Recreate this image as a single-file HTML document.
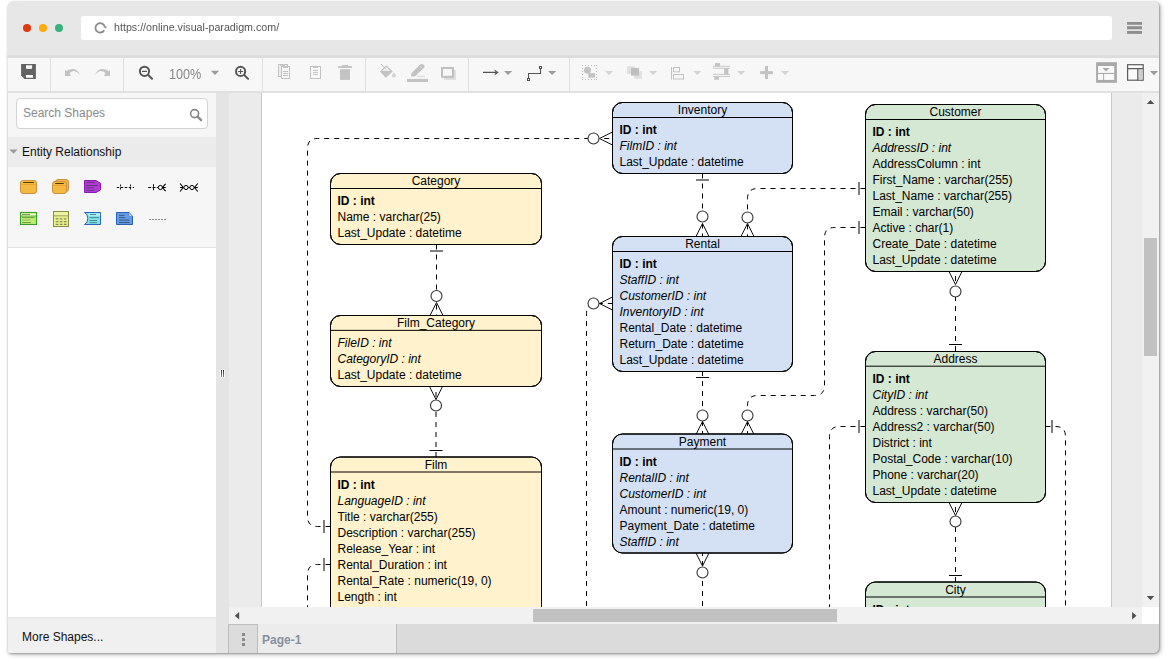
<!DOCTYPE html>
<html lang="en"><head><meta charset="utf-8"><title>Visual Paradigm Online - ERD</title>
<style>
*{box-sizing:border-box;margin:0;padding:0}
html,body{width:1170px;height:665px;overflow:hidden;background:#fff}
body{font-family:"Liberation Sans",sans-serif;font-size:12px;color:#000;position:relative}
.abs{position:absolute}
#win{position:absolute;left:7px;top:1px;width:1152px;height:652px;background:#e7e7e7;border-radius:7px 5px 6px 3px;box-shadow:1px 1px 2px 0 rgba(0,0,0,.27),2px 2px 4px 0 rgba(0,0,0,.22);overflow:hidden}
#win>*{position:absolute}
#url{left:74px;top:15px;width:1031px;height:24px;background:#fff;border-radius:3px}
#url span{will-change:opacity;position:absolute;left:33px;top:5px;font-size:10.7px;line-height:12px;color:#555;white-space:nowrap}
.dot{width:8px;height:8px;border-radius:50%;top:23px}
#tbline{left:0;top:54px;width:1152px;height:3px;background:#dcdcdc}
#toolbar{left:0;top:57px;width:1152px;height:33px;background:#f7f7f7;box-shadow:inset 1px 0 0 #e6e6e6}
#tbline2{left:0;top:90px;width:1152px;height:2px;background:#e0e0e0}
.sep{position:absolute;top:0;width:1px;height:33px;background:#dfdfdf}
#left{left:0;top:92px;width:209px;height:524px;background:#fff;border-left:1px solid #e0e0e0}
#lefttop{position:absolute;left:0;top:0;width:208px;height:155px;background:#f6f6f6;border-bottom:1px solid #e2e2e2}
#search{position:absolute;left:8px;top:5px;width:192px;height:31px;background:#fff;border:1px solid #d4d4d4;border-radius:4px}
#search span{position:absolute;left:6px;top:7px;font-size:12px;line-height:14px;color:#8a8a8a;white-space:nowrap}
#sect{position:absolute;left:0;top:44px;width:208px;height:30px;background:#ebebeb}
#sect span{position:absolute;left:14px;top:8px;font-size:12px;line-height:14px;color:#111;white-space:nowrap}
#more{left:0;top:616px;width:209px;height:36px;background:#f0f0f0;border-left:1px solid #e0e0e0;border-top:2px solid #e9e9e9}
#more span{position:absolute;left:14px;top:11px;font-size:12px;line-height:14px;color:#111;white-space:nowrap}
#split{left:209px;top:92px;width:13px;height:560px;background:#e4e4e4}
#canvas{left:222px;top:92px;width:913px;height:514px;background:#ebebeb;overflow:hidden}
#page{position:absolute;left:32px;top:-10px;width:851px;height:600px;background:#fff;border:1px solid #c8c8c8;border-top:0}
#vs{left:1135px;top:92px;width:17px;height:514px;background:#f1f1f1}
#hs{left:222px;top:606px;width:913px;height:17px;background:#f1f1f1}
#corner{left:1135px;top:606px;width:17px;height:17px;background:#fff}
#tabs{left:222px;top:623px;width:930px;height:29px;background:#dbdbdb}
#tabbtn{position:absolute;left:-1px;top:0;width:30px;height:29px;background:#dcdcdc;border:1px solid #bdbdbd;border-bottom:0}
#tab{position:absolute;left:29px;top:0;width:139px;height:29px;background:#ececec;border-right:1px solid #bcbcbc}
#tab span{position:absolute;left:4px;top:9px;font-size:12px;line-height:14px;font-weight:bold;color:#8590a0;white-space:nowrap}
.thumb{position:absolute;background:#c1c1c1}
svg{position:absolute;overflow:visible}
svg text{font-family:"Liberation Sans",sans-serif;font-size:12px;fill:#000}
svg text.b{font-weight:bold}
svg text.i{font-style:italic}
.gs{will-change:opacity}
</style></head><body>
<div id="win">
<div class="dot" style="left:16px;background:#e0370d"></div>
<div class="dot" style="left:32px;background:#ffab09"></div>
<div class="dot" style="left:48px;background:#3bb27d"></div>
<div id="url"><svg style="left:13px;top:6px" width="14" height="13" viewBox="0 0 14 13" ><path d="M10.750 4.870A4.700 4.700 0 1 0 10.220 8.200" fill="none" stroke="#8b8b8b" stroke-width="1.800"/><path d="M9.400 6.100L12.500 3.900L12.400 6.300Z" fill="#8b8b8b"/></svg><span>https://online.visual-paradigm.com/</span></div>
<svg style="left:1120px;top:21px" width="15" height="12" viewBox="0 0 15 12" ><rect x="0" y="0" width="15" height="2.800" fill="#8e8e8e"/><rect x="0" y="4.200" width="15" height="2.900" fill="#8e8e8e"/><rect x="0" y="7.100" width="15" height="0.900" fill="#cbcbcb"/><rect x="0" y="9" width="15" height="2.900" fill="#8e8e8e"/></svg>
<div id="tbline"></div>
<div id="toolbar">
<div class="sep" style="left:43px"></div>
<div class="sep" style="left:116px"></div>
<div class="sep" style="left:255px"></div>
<div class="sep" style="left:358px"></div>
<div class="sep" style="left:461px"></div>
<div class="sep" style="left:562px"></div>
<svg style="left:0;top:0" width="1152" height="33" viewBox="0 0 1152 33"><path d="M14.100 6.100h14.800v14.800h-11.600l-3.200-3.600z" fill="#636363"/><path d="M19 7.2h6.100v2.300q0 1.500-1.500 1.500h-3.100q-1.500 0-1.500-1.500z" fill="#fafafa"/><rect x="19" y="17" width="7" height="2.800" fill="#fafafa"/><path d="M58 12L59.400 13Q62.500 10.600 66.500 11Q70.500 11.500 73 16.800Q69.500 12.900 66.500 13Q63.500 13.300 62.600 15.600L64 18L58 18Z" fill="#c3c3c3"/><path d="M58 12L59.400 13Q62.500 10.600 66.500 11Q70.500 11.500 73 16.800Q69.500 12.900 66.500 13Q63.500 13.300 62.600 15.600L64 18L58 18Z" fill="#c3c3c3" transform="translate(161 0) scale(-1 1)"/><circle cx="137.500" cy="13.300" r="4.600" fill="none" stroke="#555" stroke-width="2"/><path d="M141.200 17l3.800 3.800" stroke="#555" stroke-width="2" stroke-linecap="round"/><path d="M135 13.400h5" stroke="#555" stroke-width="1.100"/><text class="gs" x="162" y="21" textLength="32.300" lengthAdjust="spacingAndGlyphs" style="font-size:14px;fill:#8a8a8a">100%</text><path d="M203.9 12.8h8.200l-4.100 4.100z" fill="#9b9b9b"/><circle cx="233.600" cy="13.400" r="4.600" fill="none" stroke="#555" stroke-width="2"/><path d="M237.300 17.100l3.800 3.800" stroke="#555" stroke-width="2" stroke-linecap="round"/><path d="M231.100 13.500h5M233.600 11v5" stroke="#555" stroke-width="1.100"/><rect x="271.500" y="6.500" width="9" height="12" fill="#ececec" stroke="#c3c3c3"/><rect x="274.500" y="8.500" width="8" height="12" fill="#f9f9f9" stroke="#c3c3c3"/><path d="M276 13.500h5M276 15.500h5M276 17.500h5" stroke="#c3c3c3"/><rect x="276" y="8.300" width="5" height="1.700" fill="#c3c3c3"/><rect x="273.500" y="6.400" width="4.500" height="1.500" fill="#c3c3c3"/><rect x="303.500" y="8.500" width="10" height="12" fill="#f9f9f9" stroke="#c3c3c3"/><path d="M306 12.400h5M306 14.400h5M306 16.400h5" stroke="#c3c3c3"/><rect x="306" y="8.300" width="5" height="1.700" fill="#c3c3c3"/><rect x="331.100" y="8.100" width="13.800" height="1.900" fill="#c3c3c3"/><rect x="335" y="7" width="6" height="1.500" fill="#c3c3c3"/><rect x="333" y="11.200" width="10" height="10.700" fill="#c3c3c3"/><path d="M379.200 7.300l6.600 6.200l-7 6.300l-5.900-6.300z" fill="#c3c3c3"/><path d="M375.300 12.800l3.900-3.700l3.900 3.700z" fill="#f7f7f7"/><path d="M374 6l5.500 5.800" stroke="#c3c3c3" stroke-width="0.900"/><circle cx="386.900" cy="17.600" r="2" fill="#d2d2d2"/><rect x="386.200" y="14.800" width="1.400" height="2" fill="#d2d2d2"/><path d="M404.200 15.500l9.300-9.300q1.100-0.800 2.200 0l1.500 1.400q0.900 1 0 2l-9.200 9h-3.800z" fill="#c3c3c3"/><path d="M413 8l2.600 2.500" stroke="#e4e4e4" stroke-width="0.700"/><rect x="400" y="20.900" width="21" height="3.100" fill="#c3c3c3"/><path d="M410 18.400h8" stroke="#d0d0d0" stroke-width="0.800"/><rect x="437" y="12" width="11.800" height="9.800" fill="#dadada"/><rect x="435" y="10" width="10.900" height="8.800" fill="#f7f7f7" stroke="#c0c0c0" stroke-width="2"/><path d="M476 14.400h13.500" stroke="#555" stroke-width="1.100"/><path d="M487.800 11.900L491.300 14.400L487.800 16.900L488.800 14.400Z" fill="#555" stroke="#555" stroke-width="0.500"/><path d="M497 13h8.200l-4.100 4.100z" fill="#9b9b9b"/><path d="M521.500 20v-4.500h12v-4.500" fill="none" stroke="#555" stroke-width="1.100"/><rect x="520.500" y="20.500" width="2" height="2" fill="#fff" stroke="#555" stroke-width="1"/><rect x="532.500" y="8.500" width="2" height="2" fill="#fff" stroke="#555" stroke-width="1"/><path d="M541 13h8.200l-4.100 4.100z" fill="#9b9b9b"/><path d="M575 7.500h15M575 21.500h15M575.500 7v15M589.500 7v15" fill="none" stroke="#bdbdbd" stroke-width="1" stroke-dasharray="1 2 1 2 1 2 1 2 1 1 1 0"/><circle cx="580.500" cy="12.300" r="3.500" fill="#c3c3c3"/><rect x="581.300" y="15.200" width="6.700" height="4.500" fill="#c3c3c3"/><path d="M598 13h8.200l-4.100 4.100z" fill="#d2d4d2"/><rect x="620" y="8.200" width="8" height="7.700" fill="#e0e0e0"/><rect x="627.200" y="13.100" width="7.600" height="7.700" fill="#e0e0e0"/><rect x="624" y="10" width="8" height="7.700" fill="#c0c0c0"/><path d="M642 13h8.200l-4.100 4.100z" fill="#d2d4d2"/><path d="M664.500 9v12.700" stroke="#c3c3c3" stroke-width="1"/><rect x="666.500" y="9.500" width="6" height="4.300" fill="none" stroke="#c3c3c3" stroke-width="1"/><rect x="666.500" y="16.500" width="10" height="4.500" fill="none" stroke="#c3c3c3" stroke-width="1"/><path d="M686.2 13h8.200l-4.100 4.100z" fill="#d2d4d2"/><path d="M705.900 8.300h17.100M705.900 10.300h17.100M705.900 16.400h17.100M705.900 18.500h17.100" stroke="#c3c3c3" stroke-width="0.900"/><rect x="708" y="5.100" width="5.100" height="3.200" fill="#c3c3c3"/><rect x="717.200" y="10.300" width="4.100" height="6.100" fill="#c3c3c3"/><rect x="707.200" y="18.500" width="4.800" height="3.200" fill="#c3c3c3"/><path d="M730 13h8.200l-4.100 4.100z" fill="#d2d4d2"/><rect x="753.100" y="13.100" width="12.800" height="3" fill="#c2c2c2"/><rect x="757.900" y="8" width="3.100" height="13" fill="#c2c2c2"/><path d="M773.9 13h8.200l-4.100 4.100z" fill="#d2d4d2"/><rect x="1089.100" y="4.200" width="20.800" height="20.600" fill="#a9a9a9"/><rect x="1091" y="8" width="16.200" height="6.900" fill="#fafafa"/><rect x="1091" y="16" width="5.100" height="5.900" fill="#fafafa"/><rect x="1097.100" y="16" width="10.100" height="5.900" fill="#fafafa"/><path d="M1095.500 10h7l-3.500 3.500z" fill="#a9a9a9"/><rect x="1120.600" y="6.700" width="15.600" height="15.500" fill="#fbfbfb" stroke="#5c5c5c" stroke-width="1.200"/><rect x="1131.400" y="11.200" width="4.200" height="10.400" fill="#cfcfcf"/><path d="M1120.600 10.600h15.600M1130.800 10.600v11.600" stroke="#5c5c5c" stroke-width="1.200"/><path d="M1142.9 13.1h8.200l-4.100 4.100z" fill="#9b9b9b"/></svg>
</div>
<div id="tbline2"></div>
<div id="left"><div id="lefttop"><div id="search"><span>Search Shapes</span><svg style="left:172px;top:9px" width="14" height="14" viewBox="0 0 14 14" ><circle cx="5.600" cy="5.600" r="4" fill="none" stroke="#868686" stroke-width="1.600"/><path d="M8.600 8.600l3.500 3.500" stroke="#868686" stroke-width="2.200" stroke-linecap="round"/></svg></div>
<div id="sect"><svg style="left:1px;top:12px" width="10" height="6" viewBox="0 0 10 6" ><path d="M0.5 0.5h8l-4 4.2z" fill="#9a9a9a"/></svg><span>Entity Relationship</span></div>
<svg style="left:0;top:0" width="208" height="155" viewBox="0 0 208 155"><rect x="12.5" y="87.5" width="16" height="13" rx="2.600" fill="#f3b940" stroke="#cf8f3e" stroke-width="1"/><path d="M15.2 89.5h10.6" stroke="#4f3c00" stroke-width="1"/><path d="M13.1 91.5h14.8" stroke="#ea9a2e" stroke-width="0.700"/><rect x="47.5" y="86.5" width="13" height="12" rx="2.600" fill="#f3b940" stroke="#cf8f3e" stroke-width="1"/><rect x="44.5" y="88.5" width="14" height="12" rx="2.600" fill="#f3b940" stroke="#cf8f3e" stroke-width="1"/><path d="M47.2 90.5h8.6" stroke="#4f3c00" stroke-width="1"/><path d="M45.1 92.5h12.8" stroke="#ea9a2e" stroke-width="0.700"/><path d="M76.500 87.500h11.500l4.500 2.800v6.600l-4.500 2.600h-11.500z" fill="#b43ad8" stroke="#8a18ac" stroke-width="1"/><path d="M78.500 89.400h8.500M78 92.500h12M78 94.800h8M78 97.300h8.500" stroke="#5e3273" stroke-width="0.900"/><path d="M108.800 94.500h17.200" stroke="#000" stroke-width="1" stroke-dasharray="2.400 1.600"/><path d="M112.500 91.500v6M122.500 91.500v6" stroke="#000" stroke-width="0.900" stroke-dasharray="2 1"/><path d="M140.200 94.500h9.800" stroke="#000" stroke-width="1" stroke-dasharray="3 1.300"/><path d="M145.500 91.200v6.600" stroke="#000" stroke-dasharray="2.600 0.800"/><circle cx="152.400" cy="94.500" r="2.100" fill="none" stroke="#000"/><path d="M157.600 90.800l-3.200 3.700l3.200 3.700M154.500 94.500h3.300" fill="none" stroke="#000" stroke-width="1.100"/><path d="M172 90.500l3.300 4l-3.300 4M172 94.500h3.500" fill="none" stroke="#000" stroke-width="1.100"/><circle cx="178" cy="94.500" r="2.100" fill="none" stroke="#000"/><path d="M180.200 94.500h1.600" stroke="#000"/><circle cx="184" cy="94.500" r="2.100" fill="none" stroke="#000"/><path d="M189.800 90.500l-3.300 4l3.300 4M186.300 94.500h3.500" fill="none" stroke="#000" stroke-width="1.100"/><rect x="12.500" y="119.500" width="16" height="12" fill="#bbf06f" stroke="#3b9b2c" stroke-width="1.100"/><rect x="13.400" y="120.500" width="14.200" height="2.200" fill="#eafcc4"/><path d="M12.700 123.100h15.600" stroke="#3b9b2c" stroke-width="0.700"/><path d="M14 121.500h8" stroke="#7a8a5a" stroke-width="0.900"/><path d="M14 124.600h12.500M14 129.600h9" stroke="#6c8f48" stroke-width="0.900"/><path d="M14 127.100h8.500" stroke="#9cc070" stroke-width="1.300"/><rect x="45.500" y="118.500" width="15" height="15" fill="#e7f08a" stroke="#8b8b4b" stroke-width="1"/><rect x="46.200" y="119.300" width="13.800" height="3" fill="#eef6a6"/><path d="M45.700 122.800h14.800" stroke="#8b8b4b" stroke-width="0.800"/><path d="M47.700 125.900h11M47.700 128.700h11M47.700 131.400h11" stroke="#8f8f55" stroke-width="1.300" stroke-dasharray="2.700 1.400"/><path d="M76.500 119.500h16v12h-16q3.300-1.200 3.300-6q0-4.800-3.300-6z" fill="#82e2e8" stroke="#2d62b4" stroke-width="1"/><path d="M80.300 120.400h11.800v2.300h-11.600z" fill="#aef4fa"/><path d="M82 121.500h6" stroke="#5a7a8a" stroke-width="0.900"/><path d="M81.500 124.600h9.500M81.500 127.500h7.500M81.500 129.700h7.500" stroke="#43808f" stroke-width="0.900"/><path d="M108.500 119.500h12.300l3.700 3.700v8.300h-16z" fill="#5f9dea" stroke="#2a5fb4"/><path d="M111 122.400h5.500M111 124.700h6M111 127.100h10.500M111 129.500h10.500" stroke="#3d4f6e" stroke-width="0.900"/><path d="M120.800 119.500v3.700h3.700z" fill="#e6f0ff" stroke="#2a5fb4" stroke-width="0.500"/><path d="M141 126.500h17" stroke="#8a8a8a" stroke-width="1" stroke-dasharray="2.100 0.900"/></svg>
</div></div>
<div id="more"><span>More Shapes...</span></div>
<div id="split"><svg style="left:3px;top:276px" width="7" height="10" viewBox="0 0 7 10" ><defs><linearGradient id="sg" x1="0" y1="0" x2="0" y2="1"><stop offset="0" stop-color="#2a2a2a"/><stop offset="1" stop-color="#8c8c8c"/></linearGradient></defs><rect x="0.900" y="0.500" width="4.800" height="7.800" fill="#fff"/><rect x="2" y="1" width="1" height="7" fill="url(#sg)"/><rect x="4" y="1" width="1" height="7" fill="url(#sg)"/></svg></div>
<div id="canvas"><div id="page"></div>
<svg width="913" height="514" viewBox="229 93 913 514" style="left:0;top:0">
<path d="M330.5 526.5L317.5 526.5Q307.5 526.5 307.5 516.5L307.5 148.5Q307.5 138.5 317.5 138.5L612.5 138.5" fill="none" stroke="#000" stroke-width="1" stroke-dasharray="5 5"/>
<path d="M324 520L324 533" fill="none" stroke="#000" stroke-width="1"/>
<path d="M612.5 132L599.5 138.5L612.5 145" fill="none" stroke="#111" stroke-width="1"/>
<circle cx="593.5" cy="138.5" r="5.5" fill="#fff" stroke="#333" stroke-width="1.1"/>
<path d="M330.5 564.5L317.5 564.5Q307.5 564.5 307.5 574.5L307.5 720" fill="none" stroke="#000" stroke-width="1" stroke-dasharray="5 5"/>
<path d="M324 558L324 571" fill="none" stroke="#000" stroke-width="1"/>
<path d="M436.5 244.5L436.5 315.5" fill="none" stroke="#000" stroke-width="1" stroke-dasharray="5 5"/>
<path d="M430 251L443 251" fill="none" stroke="#000" stroke-width="1"/>
<path d="M443 315.5L436.5 302.5L430 315.5" fill="none" stroke="#111" stroke-width="1"/>
<circle cx="436.5" cy="296" r="5.5" fill="#fff" stroke="#333" stroke-width="1.1"/>
<path d="M436 457L436 386.5" fill="none" stroke="#000" stroke-width="1" stroke-dasharray="5 5"/>
<path d="M442.5 450.5L429.5 450.5" fill="none" stroke="#000" stroke-width="1"/>
<path d="M429.5 386.5L436 399.5L442.5 386.5" fill="none" stroke="#111" stroke-width="1"/>
<circle cx="436" cy="405.5" r="5.5" fill="#fff" stroke="#333" stroke-width="1.1"/>
<path d="M702.5 173.5L702.5 236.5" fill="none" stroke="#000" stroke-width="1" stroke-dasharray="5 5"/>
<path d="M696 180L709 180" fill="none" stroke="#000" stroke-width="1"/>
<path d="M709 236.5L702.5 223.5L696 236.5" fill="none" stroke="#111" stroke-width="1"/>
<circle cx="702.5" cy="216.5" r="5.5" fill="#fff" stroke="#333" stroke-width="1.1"/>
<path d="M865.5 188.5L757.5 188.5Q747.5 188.5 747.5 198.5L747.5 236.5" fill="none" stroke="#000" stroke-width="1" stroke-dasharray="5 5"/>
<path d="M859 182L859 195" fill="none" stroke="#000" stroke-width="1"/>
<path d="M754 236.5L747.5 223.5L741 236.5" fill="none" stroke="#111" stroke-width="1"/>
<circle cx="747.5" cy="217.5" r="5.5" fill="#fff" stroke="#333" stroke-width="1.1"/>
<path d="M586.5 720L586.5 313.5Q586.5 303.5 596.5 303.5L612.5 303.5" fill="none" stroke="#000" stroke-width="1" stroke-dasharray="5 5" stroke-dashoffset="6"/>
<path d="M612.5 297L599.5 303.5L612.5 310" fill="none" stroke="#111" stroke-width="1"/>
<circle cx="593.5" cy="303.5" r="5.5" fill="#fff" stroke="#333" stroke-width="1.1"/>
<path d="M702.5 371L702.5 434.5" fill="none" stroke="#000" stroke-width="1" stroke-dasharray="5 5"/>
<path d="M696 377.5L709 377.5" fill="none" stroke="#000" stroke-width="1"/>
<path d="M709 434.5L702.5 421.5L696 434.5" fill="none" stroke="#111" stroke-width="1"/>
<circle cx="702.5" cy="415.5" r="5.5" fill="#fff" stroke="#333" stroke-width="1.1"/>
<path d="M865.5 227.5L834.5 227.5Q824.5 227.5 824.5 237.5L824.5 385.5Q824.5 395.5 814.5 395.5L757.5 395.5Q747.5 395.5 747.5 405.5L747.5 434.5" fill="none" stroke="#000" stroke-width="1" stroke-dasharray="5 5"/>
<path d="M859 221L859 234" fill="none" stroke="#000" stroke-width="1"/>
<path d="M754 434.5L747.5 421.5L741 434.5" fill="none" stroke="#111" stroke-width="1"/>
<circle cx="747.5" cy="415.5" r="5.5" fill="#fff" stroke="#333" stroke-width="1.1"/>
<path d="M702.5 720L702.5 553" fill="none" stroke="#000" stroke-width="1" stroke-dasharray="5 5" stroke-dashoffset="6"/>
<path d="M696 553L702.5 566L709 553" fill="none" stroke="#111" stroke-width="1"/>
<circle cx="702.5" cy="572.5" r="5.5" fill="#fff" stroke="#333" stroke-width="1.1"/>
<path d="M955.5 351L955.5 271.5" fill="none" stroke="#000" stroke-width="1" stroke-dasharray="5 5"/>
<path d="M962 344.5L949 344.5" fill="none" stroke="#000" stroke-width="1"/>
<path d="M949 271.5L955.5 284.5L962 271.5" fill="none" stroke="#111" stroke-width="1"/>
<circle cx="955.5" cy="291.5" r="5.5" fill="#fff" stroke="#333" stroke-width="1.1"/>
<path d="M865.5 426.5L839.5 426.5Q829.5 426.5 829.5 436.5L829.5 720" fill="none" stroke="#000" stroke-width="1" stroke-dasharray="5 5"/>
<path d="M859 420L859 433" fill="none" stroke="#000" stroke-width="1"/>
<path d="M1045.5 426.5L1055.5 426.5Q1065.5 426.5 1065.5 436.5L1065.5 720" fill="none" stroke="#000" stroke-width="1" stroke-dasharray="5 5"/>
<path d="M1052 433L1052 420" fill="none" stroke="#000" stroke-width="1"/>
<path d="M955.5 582L955.5 502.5" fill="none" stroke="#000" stroke-width="1" stroke-dasharray="5 5"/>
<path d="M962 575.5L949 575.5" fill="none" stroke="#000" stroke-width="1"/>
<path d="M949 502.5L955.5 515.5L962 502.5" fill="none" stroke="#111" stroke-width="1"/>
<circle cx="955.5" cy="521.5" r="5.5" fill="#fff" stroke="#333" stroke-width="1.1"/>
<rect x="330.5" y="173.5" width="211" height="71" rx="10" ry="10" fill="#fff2cc" stroke="#000" stroke-width="1"/>
<rect x="330.5" y="173.5" width="211" height="71" rx="10" ry="10" fill="none" stroke="#000" stroke-opacity="1" stroke-width="1"/>
<rect x="330.5" y="173.5" width="211" height="71" rx="10" ry="10" fill="none" stroke="#000" stroke-opacity="0.35" stroke-width="1"/>
<path d="M330.5 188.5H541.5" stroke="#000" stroke-width="1" fill="none"/>
<text x="436.0" y="185" text-anchor="middle">Category</text>
<text x="337.5" y="205" class="b">ID : int</text>
<text x="337.5" y="221">Name : varchar(25)</text>
<text x="337.5" y="237">Last_Update : datetime</text>
<rect x="330.5" y="315.5" width="211" height="71" rx="10" ry="10" fill="#fff2cc" stroke="#000" stroke-width="1"/>
<rect x="330.5" y="315.5" width="211" height="71" rx="10" ry="10" fill="none" stroke="#000" stroke-opacity="1" stroke-width="1"/>
<rect x="330.5" y="315.5" width="211" height="71" rx="10" ry="10" fill="none" stroke="#000" stroke-opacity="0.35" stroke-width="1"/>
<path d="M330.5 330.35H541.5" stroke="#000" stroke-width="1" fill="none"/>
<text x="436.0" y="327" text-anchor="middle">Film_Category</text>
<text x="337.5" y="347" class="i">FileID : int</text>
<text x="337.5" y="363" class="i">CategoryID : int</text>
<text x="337.5" y="379">Last_Update : datetime</text>
<rect x="330.5" y="457" width="211" height="200" rx="10" ry="10" fill="#fff2cc" stroke="#000" stroke-width="1"/>
<rect x="330.5" y="457" width="211" height="200" rx="10" ry="10" fill="none" stroke="#000" stroke-opacity="1" stroke-width="1"/>
<rect x="330.5" y="457" width="211" height="200" rx="10" ry="10" fill="none" stroke="#000" stroke-opacity="0.35" stroke-width="1"/>
<path d="M330.5 472H541.5" stroke="#000" stroke-width="1" fill="none"/>
<text x="436.0" y="469" text-anchor="middle">Film</text>
<text x="337.5" y="489" class="b">ID : int</text>
<text x="337.5" y="505" class="i">LanguageID : int</text>
<text x="337.5" y="521">Title : varchar(255)</text>
<text x="337.5" y="537">Description : varchar(255)</text>
<text x="337.5" y="553">Release_Year : int</text>
<text x="337.5" y="569">Rental_Duration : int</text>
<text x="337.5" y="585">Rental_Rate : numeric(19, 0)</text>
<text x="337.5" y="601">Length : int</text>
<rect x="612.5" y="102.5" width="180" height="71" rx="10" ry="10" fill="#d4e1f5" stroke="#000" stroke-width="1"/>
<rect x="612.5" y="102.5" width="180" height="71" rx="10" ry="10" fill="none" stroke="#000" stroke-opacity="1" stroke-width="1"/>
<rect x="612.5" y="102.5" width="180" height="71" rx="10" ry="10" fill="none" stroke="#000" stroke-opacity="0.35" stroke-width="1"/>
<path d="M612.5 117.5H792.5" stroke="#000" stroke-width="1" fill="none"/>
<text x="702.5" y="114" text-anchor="middle">Inventory</text>
<text x="619.5" y="134" class="b">ID : int</text>
<text x="619.5" y="150" class="i">FilmID : int</text>
<text x="619.5" y="166">Last_Update : datetime</text>
<rect x="612.5" y="236.5" width="180" height="135" rx="10" ry="10" fill="#d4e1f5" stroke="#000" stroke-width="1"/>
<rect x="612.5" y="236.5" width="180" height="135" rx="10" ry="10" fill="none" stroke="#000" stroke-opacity="1" stroke-width="1"/>
<rect x="612.5" y="236.5" width="180" height="135" rx="10" ry="10" fill="none" stroke="#000" stroke-opacity="0.35" stroke-width="1"/>
<path d="M612.5 251.5H792.5" stroke="#000" stroke-width="1" fill="none"/>
<text x="702.5" y="248" text-anchor="middle">Rental</text>
<text x="619.5" y="268" class="b">ID : int</text>
<text x="619.5" y="284" class="i">StaffID : int</text>
<text x="619.5" y="300" class="i">CustomerID : int</text>
<text x="619.5" y="316" class="i">InventoryID : int</text>
<text x="619.5" y="332">Rental_Date : datetime</text>
<text x="619.5" y="348">Return_Date : datetime</text>
<text x="619.5" y="364">Last_Update : datetime</text>
<rect x="612.5" y="434" width="180" height="119" rx="10" ry="10" fill="#d4e1f5" stroke="#000" stroke-width="1"/>
<rect x="612.5" y="434" width="180" height="119" rx="10" ry="10" fill="none" stroke="#000" stroke-opacity="1" stroke-width="1"/>
<rect x="612.5" y="434" width="180" height="119" rx="10" ry="10" fill="none" stroke="#000" stroke-opacity="0.35" stroke-width="1"/>
<path d="M612.5 449H792.5" stroke="#000" stroke-width="1" fill="none"/>
<text x="702.5" y="446" text-anchor="middle">Payment</text>
<text x="619.5" y="466" class="b">ID : int</text>
<text x="619.5" y="482" class="i">RentalID : int</text>
<text x="619.5" y="498" class="i">CustomerID : int</text>
<text x="619.5" y="514">Amount : numeric(19, 0)</text>
<text x="619.5" y="530">Payment_Date : datetime</text>
<text x="619.5" y="546" class="i">StaffID : int</text>
<rect x="865.5" y="104.5" width="180" height="167" rx="10" ry="10" fill="#d5e8d4" stroke="#000" stroke-width="1"/>
<rect x="865.5" y="104.5" width="180" height="167" rx="10" ry="10" fill="none" stroke="#000" stroke-opacity="1" stroke-width="1"/>
<rect x="865.5" y="104.5" width="180" height="167" rx="10" ry="10" fill="none" stroke="#000" stroke-opacity="0.35" stroke-width="1"/>
<path d="M865.5 119.5H1045.5" stroke="#000" stroke-width="1" fill="none"/>
<text x="955.5" y="116" text-anchor="middle">Customer</text>
<text x="872.5" y="136" class="b">ID : int</text>
<text x="872.5" y="152" class="i">AddressID : int</text>
<text x="872.5" y="168">AddressColumn : int</text>
<text x="872.5" y="184">First_Name : varchar(255)</text>
<text x="872.5" y="200">Last_Name : varchar(255)</text>
<text x="872.5" y="216">Email : varchar(50)</text>
<text x="872.5" y="232">Active : char(1)</text>
<text x="872.5" y="248">Create_Date : datetime</text>
<text x="872.5" y="264">Last_Update : datetime</text>
<rect x="865.5" y="351.5" width="180" height="151" rx="10" ry="10" fill="#d5e8d4" stroke="#000" stroke-width="1"/>
<rect x="865.5" y="351.5" width="180" height="151" rx="10" ry="10" fill="none" stroke="#000" stroke-opacity="1" stroke-width="1"/>
<rect x="865.5" y="351.5" width="180" height="151" rx="10" ry="10" fill="none" stroke="#000" stroke-opacity="0.35" stroke-width="1"/>
<path d="M865.5 366.2H1045.5" stroke="#000" stroke-width="1" fill="none"/>
<text x="955.5" y="363" text-anchor="middle">Address</text>
<text x="872.5" y="383" class="b">ID : int</text>
<text x="872.5" y="399" class="i">CityID : int</text>
<text x="872.5" y="415">Address : varchar(50)</text>
<text x="872.5" y="431">Address2 : varchar(50)</text>
<text x="872.5" y="447">District : int</text>
<text x="872.5" y="463">Postal_Code : varchar(10)</text>
<text x="872.5" y="479">Phone : varchar(20)</text>
<text x="872.5" y="495">Last_Update : datetime</text>
<rect x="865.5" y="582" width="180" height="100" rx="10" ry="10" fill="#d5e8d4" stroke="#000" stroke-width="1"/>
<rect x="865.5" y="582" width="180" height="100" rx="10" ry="10" fill="none" stroke="#000" stroke-opacity="1" stroke-width="1"/>
<rect x="865.5" y="582" width="180" height="100" rx="10" ry="10" fill="none" stroke="#000" stroke-opacity="0.35" stroke-width="1"/>
<path d="M865.5 597H1045.5" stroke="#000" stroke-width="1" fill="none"/>
<text x="955.5" y="594" text-anchor="middle">City</text>
<text x="872.5" y="614" class="b">ID : int</text>
</svg></div>
<div id="vs"><svg style="left:0px;top:0px" width="17" height="514" viewBox="0 0 17 514" ><path d="M4.800 11h7.400l-3.700-4.100z" fill="#505050"/><path d="M4.800 503h7.400l-3.700 4.200z" fill="#505050"/></svg><div class="thumb" style="left:2px;top:145px;width:13px;height:118px"></div></div>
<div id="hs"><svg style="left:0px;top:0px" width="913" height="17" viewBox="0 0 913 17" ><path d="M10.200 5h0v7.400l-4.400-3.700z" fill="#505050"/><path d="M903.100 5v7.400l4.400-3.700z" fill="#505050"/></svg><div class="thumb" style="left:304px;top:2px;width:304px;height:13px"></div></div>
<div id="corner"></div>
<div id="tabs"><div id="tabbtn"><svg style="left:12px;top:8px" width="5" height="14" viewBox="0 0 5 14" ><rect x="1" y="0" width="3" height="3" fill="#8a8a8a"/><rect x="1" y="5" width="3" height="3" fill="#8a8a8a"/><rect x="1" y="10" width="3" height="3" fill="#8a8a8a"/></svg></div><div id="tab"><span>Page-1</span></div></div>
</div>
</body></html>
